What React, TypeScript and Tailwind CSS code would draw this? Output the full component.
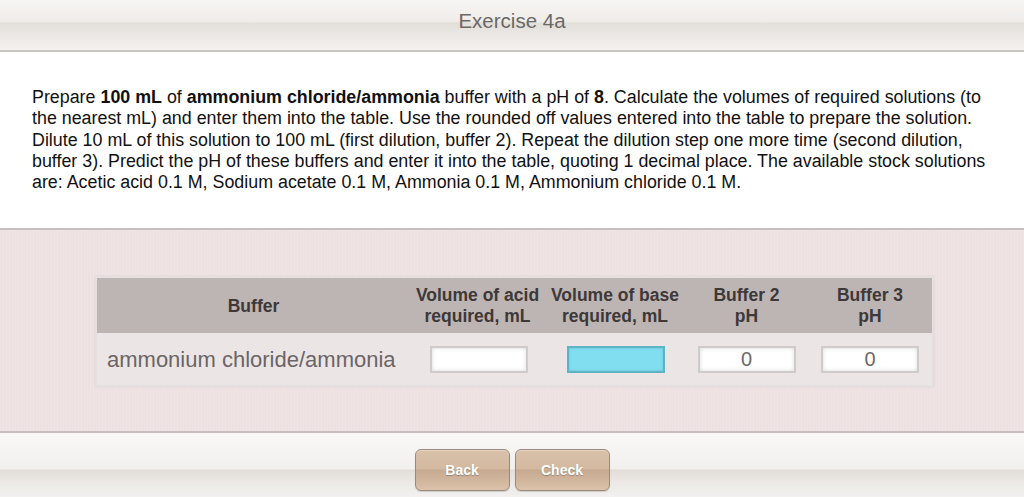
import React from "react";

const font = { fontFamily: '"Liberation Sans", Arial, Helvetica, sans-serif' };

function Cell({ value, active }: { value?: string; active?: boolean }) {
  return (
    <div
      className={
        active
          ? "w-[98px] h-[27px] border-2 border-[#5eb3c4] bg-[#80def0] shadow-[inset_0_0_3px_rgba(0,0,0,0.15)]"
          : "w-[98px] h-[27px] border-2 border-[#cfcbcb] bg-white shadow-[inset_0_0_4px_rgba(0,0,0,0.15)] flex items-center justify-center text-[20px] text-[#6d6868] leading-none"
      }
    >
      {value}
    </div>
  );
}

export default function App() {
  return (
    <div className="w-[1024px] h-[497px] flex flex-col overflow-hidden bg-white" style={font}>
      {/* header */}
      <div className="h-[52px] shrink-0 border-b-2 border-[#c9c5c1] bg-[linear-gradient(to_bottom,#f7f5f3_0px,#efecea_22px,#e2ded9_23px,#ebe8e5_35px,#f3f1ef_50px)] flex items-start justify-center pt-[9px]">
        <span className="text-[20.5px] text-[#6c6866] leading-[24px]">Exercise 4a</span>
      </div>

      {/* question */}
      <div className="h-[176px] shrink-0 bg-white pl-8 pr-[29px] pt-[35px]">
        <p className="text-[17.85px] leading-[21.25px] text-[#111]">
          Prepare <b>100 mL</b> of <b>ammonium chloride/ammonia</b> buffer with a pH of <b>8</b>. Calculate the volumes of required solutions (to the nearest mL) and enter them into the table. Use the rounded off values entered into the table to prepare the solution. Dilute 10 mL of this solution to 100 mL (first dilution, buffer 2). Repeat the dilution step one more time (second dilution, buffer 3). Predict the pH of these buffers and enter it into the table, quoting 1 decimal place. The available stock solutions are: Acetic acid 0.1 M, Sodium acetate 0.1 M, Ammonia 0.1 M, Ammonium chloride 0.1 M.
        </p>
      </div>

      {/* work area */}
      <div className="h-[205px] shrink-0 border-t-2 border-b-2 border-[#c7bfbf] bg-[#ede1e2] bg-[repeating-linear-gradient(to_right,rgba(255,255,255,0.12)_0px,rgba(255,255,255,0.12)_1px,rgba(0,0,0,0)_1px,rgba(0,0,0,0)_3px)] pt-[46px] pl-[95px]">
        <div className="w-[839px] border-2 border-[#e6dfdf] shadow-[0_0_2px_rgba(0,0,0,0.08)]">
          <div className="flex h-[55px] bg-[#bdb5b3] text-[#3e3838] font-bold text-[17.5px] leading-[21px] text-center">
            <div className="w-[313px] flex items-center justify-center pt-[2px]">Buffer</div>
            <div className="w-[135px] flex items-center justify-center">
              <span>Volume of acid<br />required, mL</span>
            </div>
            <div className="w-[140px] flex items-center justify-center">
              <span>Volume of base<br />required, mL</span>
            </div>
            <div className="w-[123px] flex items-center justify-center">
              <span>Buffer 2<br />pH</span>
            </div>
            <div className="flex-1 flex items-center justify-center">
              <span>Buffer 3<br />pH</span>
            </div>
          </div>
          <div className="flex h-[52px] bg-[#ebe6e5] items-center">
            <div className="w-[313px] pl-[10px] text-[22px] text-[#6b6565]">ammonium chloride/ammonia</div>
            <div className="w-[135px] flex justify-center pl-[2px]"><Cell /></div>
            <div className="w-[140px] flex justify-center pl-[1px]"><Cell active /></div>
            <div className="w-[123px] flex justify-center"><Cell value="0" /></div>
            <div className="flex-1 flex justify-center"><Cell value="0" /></div>
          </div>
        </div>
      </div>

      {/* footer */}
      <div className="flex-1 bg-[linear-gradient(to_bottom,#f9f8f6_0px,#f2f0ee_36px,#e1ddd8_37px,#ece9e6_50px,#f3f1ef_64px)] flex justify-center gap-[5px] pt-[16px]">
        {["Back", "Check"].map((t) => (
          <button
            key={t}
            className="w-[95px] h-[42px] rounded-[6px] border border-[#9a8a7e] bg-[linear-gradient(to_bottom,#d9c1aa_0px,#d3b9a0_19px,#c5a990_20px,#d3b8a0_32px,#dcc2aa_40px)] shadow-[inset_0_1px_0_rgba(255,255,255,0.35),0_1px_1px_rgba(0,0,0,0.15)] text-white text-[14px] font-bold [text-shadow:0_1px_1px_rgba(0,0,0,0.25)]"
          >
            {t}
          </button>
        ))}
      </div>
    </div>
  );
}
